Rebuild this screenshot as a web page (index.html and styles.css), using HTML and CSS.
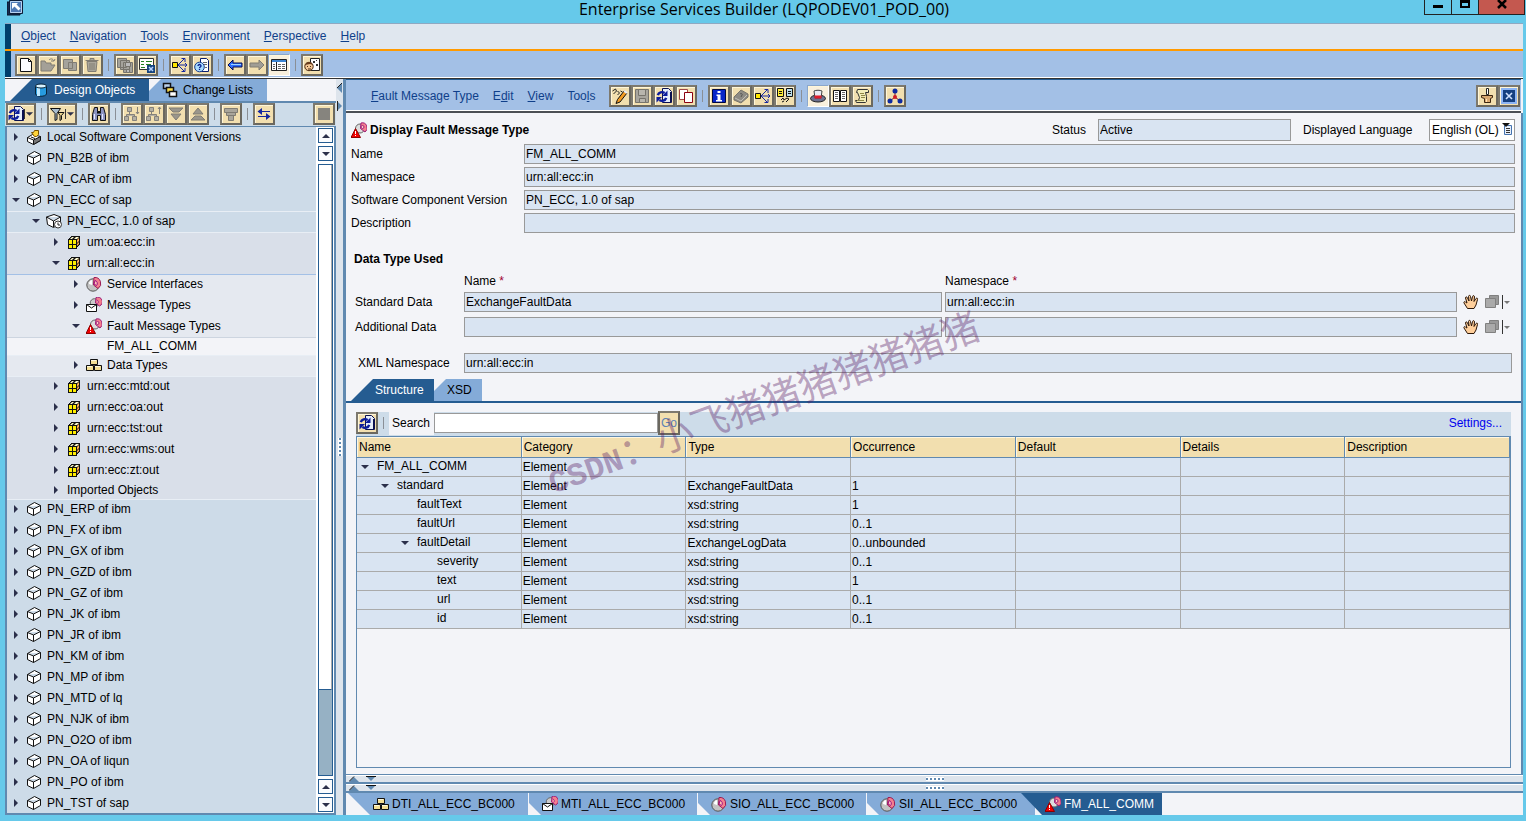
FILE: index.html
```
<!DOCTYPE html>
<html lang="en">
<head>
<meta charset="utf-8">
<title>Enterprise Services Builder (LQPODEV01_POD_00)</title>
<link rel="stylesheet" href="styles.css">
</head>
<body>
<svg class="defs" aria-hidden="true">
  <symbol id="right" viewBox="0 0 10 10"><path d="M3 1v8l4-4z" fill="#2b2f4a"/></symbol>
  <symbol id="down" viewBox="0 0 10 10"><path d="M1 3h8L5 7z" fill="#2b2f4a"/></symbol>
  <symbol id="up" viewBox="0 0 10 10"><path d="M1 7h8L5 3z" fill="#2b2f4a"/></symbol>
  <symbol id="cube" viewBox="0 0 16 16"><path d="M1.500 5.500 8.500 1.500 14.500 4.500V10.500L7.500 14.500 1.500 11.500zM1.500 5.500 7.500 8 14.500 4.500M7.500 8v6.500" fill="#fff" stroke="#111"/></symbol>
  <symbol id="cubeclock" viewBox="0 0 16 16"><path d="M.500 4 8 1.500 14.500 4V10.500L7.500 14.500 1.500 11.500zM.500 4 7.500 8 14.500 4M7.500 8v6" fill="#fff" stroke="#111"/><circle cx="12" cy="11.500" r="3.500" fill="#fff" stroke="#333"/><path d="M12 9.500v2.500h2" fill="none" stroke="#222"/></symbol>
  <symbol id="local" viewBox="0 0 16 16"><path d="M1.500 8.500 6.500 5.500 14.500 7.500V11.500L7.500 15.500 1.500 12.500z" fill="#fff" stroke="#111"/><path d="M7.500 11l7-3.500v4L7.500 15.500z" fill="#777" stroke="#111"/><path d="M1.500 8.500 7.500 11M5 8l4 1.500" fill="none" stroke="#111"/><path d="M5.500 3.500h2l1-2h4v4l-2 2h-2z" fill="#ffd43a" stroke="#7a5200"/></symbol>
  <symbol id="ns" viewBox="0 0 16 16"><path d="M2 5h1V4h1V3h1V2h9v9h-1v1h-1v1h-1v2H2z" fill="#111"/><path d="M4 5l2-2h2L6 5zM8 5l2-2h3l-2 2z" fill="#fffbd0"/><path d="M3 6h3v4H3zM7 6h3v4H7zM3 11h3v3H3zM7 11h3v3H7z" fill="#ffee00"/><path d="M11 6l2-2v3l-2 2zM11 10l2-2v2l-2 2z" fill="#ffae57"/></symbol>
  <symbol id="ball" viewBox="0 0 16 16"><circle cx="7" cy="9" r="6.200" fill="#c4c4c4" stroke="#555"/><path d="M3 8a4 4 0 0 1 3-4v5z" fill="#fff"/><path d="M8 1.500a6 6 0 0 1 4 11L7.500 9z" fill="#f47f8d" stroke="#9b1c55"/><path d="M9 4.500a3 3 0 0 1 1.500 5L8 8z" fill="#ffc0b0" stroke="#9c0f87"/></symbol>
  <symbol id="msg" viewBox="0 0 16 16"><circle cx="8.500" cy="6" r="4.300" fill="#ccc" stroke="#666"/><path d="M10 .500a4.500 4.500 0 0 1 3.500 8.500L9.500 6z" fill="#f47f8d" stroke="#9b1c77"/><path d="M10.500 3a2 2 0 0 1 1 3.500" fill="#ffd2c0" stroke="#9c0f87"/><path d="M.500 7.500h10v7h-10z" fill="#fff" stroke="#111"/><path d="M.500 7.500 5.500 11l5-3.500" fill="none" stroke="#111"/></symbol>
  <symbol id="fault" viewBox="0 0 16 16"><circle cx="9" cy="6.500" r="4.500" fill="#ddd" stroke="#666"/><path d="M10 1a5 5 0 0 1 4 9L9.500 6.500z" fill="#f47f8d" stroke="#9b1c77"/><circle cx="11.500" cy="5" r="1.500" fill="#ffd2c0" stroke="#a02080"/><path d="M4.500 6.500 9.500 15.500H0z" fill="#f00000" stroke="#8c0000"/><path d="M4 9h1v3H4zM4 13h1v1H4z" fill="#fff"/></symbol>
  <symbol id="dtype" viewBox="0 0 16 16"><path d="M4.500 2.500h7v5h-7zM.500 8.500h7v5h-7zM8.500 8.500h7v5h-7z" fill="#f4df94" stroke="#111"/><path d="M5 3.500h5M1 9.500h5M9 9.500h5" stroke="#fffbe0"/></symbol>
  <symbol id="page" viewBox="0 0 16 16"><path d="M2.500 1.500h8l3 3v10h-11z" fill="#fdfdff" stroke="#111"/><path d="M10.500 1.500v3h3" fill="none" stroke="#111"/></symbol>
  <symbol id="open" viewBox="0 0 16 16"><path d="M1 14V4h4l1 2h5v2h4l-4 6z" fill="#a4a097" stroke="#807c73"/><path d="M9 3c2-2 4-1 5 1l1-2M14 4h-3" fill="none" stroke="#807c73"/></symbol>
  <symbol id="copyoff" viewBox="0 0 16 16"><path d="M1.500 2.500h9v9h-9zM6.500 5.500h8v8h-8z" fill="#a5a39c" stroke="#807c73"/></symbol>
  <symbol id="trash" viewBox="0 0 16 16"><path d="M3 4.500h10l-1 10H4zM1.500 3.500h13M6 3V1.500h4V3" fill="#aaa69b" stroke="#807c73"/><path d="M6 6v7M8 6v7M10 6v7" stroke="#807c73"/></symbol>
  <symbol id="saveall" viewBox="0 0 16 16"><path d="M.500 1.500h9v9h-9zM3.500 3.500h9v9h-9zM6.500 5.500h9v10h-9z" fill="#a5a39c" stroke="#77746c"/><path d="M8.500 5.500h5v4h-5zM9.500 12.500h3v3h-3z" fill="#bbb" stroke="#77746c"/></symbol>
  <symbol id="listx" viewBox="0 0 16 16"><path d="M.500 1.500h14v11h-14z" fill="#fff" stroke="#333"/><path d="M2 4.500h3m2 0h6M2 7.500h3m2 0h5M2 10.500h4" stroke="#248024"/><path d="M8 8h8v8H8z" fill="#16447f"/><path d="M10 10l4 4m0-4-4 4" stroke="#b8d4ff" stroke-width="1.500"/></symbol>
  <symbol id="where" viewBox="0 0 16 16"><path d="M6 8h9M6 8l6-6M6 8l6 6M13 6l2 2-2 2M9.500 1.500H13V5M9.500 14.500H13V11" fill="none" stroke="#1527a0"/><path d="M.500 5.500h5v5h-5z" fill="#ffe600" stroke="#111"/></symbol>
  <symbol id="helpdoc" viewBox="0 0 16 16"><path d="M6.500 1.500h6l2 2v11h-8z" fill="#fff" stroke="#0a1f70"/><path d="M9 5.500h4M9 7.500h4M11 10.500h2" stroke="#666"/><circle cx="5.500" cy="10" r="4.800" fill="#a8dcff" stroke="#173a8c"/><path d="M4 9c0-2 3-2 3 0 0 1-1.500 1-1.500 2.200M5.500 12v1" fill="none" stroke="#0a1f90" stroke-width="1.300"/></symbol>
  <symbol id="back" viewBox="0 0 16 16"><path d="M1 8l5-5v3h9v4H6v3z" fill="#2c6cff" stroke="#050a50"/><path d="M4 7.500h10" stroke="#9fd4ff"/></symbol>
  <symbol id="fwd" viewBox="0 0 16 16"><path d="M15 8l-5-5v3H1v4h9v3z" fill="#a09d95" stroke="#807c73"/></symbol>
  <symbol id="panes" viewBox="0 0 16 16"><path d="M.500 2.500h15v11H.500z" fill="#fff" stroke="#222"/><path d="M1 4h14" stroke="#3b83d0" stroke-width="2"/><path d="M5.500 5v8" stroke="#222"/><path d="M2 7.500h2m-2 2h2m-2 2h2m3-4h3m1 0h3m-7 2h3m1 0h3m-7 2h3m1 0h3" stroke="#666"/></symbol>
  <symbol id="user" viewBox="0 0 16 16"><path d="M6.500 1.500h9v12h-9z" fill="#fff" stroke="#222"/><path d="M9 4h2v2H9zM12 7h2v2h-2zM12 3h1v1h-1z" fill="#333"/><circle cx="5" cy="9.500" r="4.200" fill="#f4c794" stroke="#4a2a12"/><path d="M1 8c1-4 7-4 8 0L6 7z" fill="#6a3d1c"/><path d="M3 9.500h1m2 0h1M4 12h3" stroke="#4a2a12"/></symbol>
  <symbol id="refresh" viewBox="0 0 16 16"><path d="M6.500.500h6l3 3v11h-9z" fill="#e6eefb" stroke="#0a1050"/><path d="M14.500 4v11" stroke="#0a1050"/><path d="M1.800 7.200A4.400 4.400 0 0 1 8.600 5M10.200 9.800A4.400 4.400 0 0 1 3.400 12" fill="none" stroke="#0c1c9c" stroke-width="2.400"/><path d="M11.500 2.500v5.500H6zM.500 14.500V9H6z" fill="#0c1c9c"/></symbol>
  <symbol id="filter" viewBox="0 0 16 16"><path d="M1.500 2.500h10L8 7.500v6l-2 1v-7z" fill="#a9bdd0" stroke="#111"/><path d="M9 6.500h6l-2.500 3v4l-1.500 1v-5z" fill="#eed893" stroke="#111"/></symbol>
  <symbol id="find" viewBox="0 0 16 16"><path d="M3.500 1.500h3v4h3v-4h3l2 7v6h-5v-5h-3v5h-5v-6z" fill="#8c94c2" stroke="#111"/><path d="M3.500 8v5M11.500 8v5" stroke="#e6eaff"/><path d="M6 6.500h4" stroke="#111" stroke-width="2"/></symbol>
  <symbol id="expand" viewBox="0 0 16 16"><path d="M3.500 1.500h4v4h-4zM.500 10.500h4v4h-4zM8.500 10.500h4v4h-4zM5.500 6v2M2.500 10V8.500h8V10M13.500 1v7M12 6l1.500 2L15 6" fill="#b3afa4" stroke="#85817a"/></symbol>
  <symbol id="collapse" viewBox="0 0 16 16"><path d="M3.500 1.500h4v4h-4zM.500 10.500h4v4h-4zM8.500 10.500h4v4h-4zM5.500 6v2M2.500 10V8.500h8V10M13.500 8V1M12 3l1.500-2L15 3" fill="#b3afa4" stroke="#85817a"/></symbol>
  <symbol id="alldown" viewBox="0 0 16 16"><path d="M1 2h14l-4 4H5zM3 8h10l-5 6z" fill="#9a968c" stroke="#807c73"/></symbol>
  <symbol id="allup" viewBox="0 0 16 16"><path d="M8 2l5 6H3zM5 10h6l4 4H1z" fill="#9a968c" stroke="#807c73"/></symbol>
  <symbol id="sieve" viewBox="0 0 16 16"><path d="M1.500 2.500h13v4h-13zM3.500 6.500h9v3h-9zM5.500 9.500h5v5h-5z" fill="#aaa69b" stroke="#807c73"/></symbol>
  <symbol id="swap" viewBox="0 0 16 16"><path d="M14 5.500H3M2 10.500h11" stroke="#1527a0"/><path d="M6 2v7L1.500 5.500zM10 7v7l4.500-3.500z" fill="#1527a0"/></symbol>
  <symbol id="stop" viewBox="0 0 16 16"><path d="M2 2h12v12H2z" fill="#86847e"/></symbol>
  <symbol id="edit" viewBox="0 0 16 16"><path d="M5.500 11.500 12 3l3 2-7 9-4 1.500z" fill="#f39b22" stroke="#111"/><path d="M12 3l3 2" stroke="#e8eefc" stroke-width="2"/><path d="M.500 3l3-2 1 2-3 3m4-3 2 2-2 2m3-4 2 1" fill="none" stroke="#222"/></symbol>
  <symbol id="disk" viewBox="0 0 16 16"><path d="M1.500 1.500h13v13h-13z" fill="#a8a59d" stroke="#77746c"/><path d="M4.500 1.500h7v6h-7zM5.500 10.500h6v4h-6z" fill="#b9b6ae" stroke="#77746c"/></symbol>
  <symbol id="copy" viewBox="0 0 16 16"><path d="M1.500 1.500h8v10h-8z" fill="#fff" stroke="#a04848"/><path d="M6.500 4.500h8v10h-8z" fill="#fff" stroke="#8a0010"/></symbol>
  <symbol id="info" viewBox="0 0 16 16"><path d="M1.500 1.500h13v13h-13z" fill="#0826c8" stroke="#000840"/><path d="M6.500 3h3v2h-3zM5.500 6.500h4V12h1.500v1.500h-6V12h1.500V8H5.500z" fill="#fff"/></symbol>
  <symbol id="book" viewBox="0 0 16 16"><path d="M1 9 8 2l7 4v3l-7 6-7-3z" fill="#8e8b84" stroke="#77746c"/><path d="M2 10l6 3 6-6" fill="none" stroke="#c2bfb7"/><path d="M7 6c1-1 3 0 2 1L8 9" fill="none" stroke="#555"/></symbol>
  <symbol id="compare" viewBox="0 0 16 16"><path d="M.500.500h6v8h-6z" fill="#ffed37" stroke="#111"/><path d="M9.500.500h6v8h-6z" fill="#b9ddec" stroke="#111"/><path d="M2 3.500h3M2 5.500h3m6-2h3m-3 2h3" stroke="#111"/><path d="M4 12l2-2 1 2 3-2 2 1-3 3M5 14l2-1" fill="none" stroke="#111"/></symbol>
  <symbol id="hat" viewBox="0 0 16 16"><ellipse cx="8" cy="10.500" rx="7.500" ry="3.500" fill="#6c7190" stroke="#222"/><path d="M4 3c2-1 6-1 8 0l-1 7H5z" fill="#e8eaf2" stroke="#444"/><path d="M4.500 7.500h7v3h-7z" fill="#e01b2b"/></symbol>
  <symbol id="openbook" viewBox="0 0 16 16"><path d="M1.500 2.500h6v11h-6zM8.500 2.500h6v11h-6z" fill="#fff" stroke="#111"/><path d="M3 4.500h3M3 6.500h3M3 8.500h3M3 10.500h3M10 4.500h3M10 6.500h3M10 8.500h3M10 10.500h3" stroke="#666"/></symbol>
  <symbol id="scroll" viewBox="0 0 16 16"><path d="M3.500 1.500h10l1 1v2h-3l1 4v5l-1 1h-9l-1-2h3l1-3-2-5h-1z" fill="#f3edb9" stroke="#333"/><path d="M6 5.500h4M7 7.500h4M7 9.500h4M3 12.500h7" stroke="#8f8747"/></symbol>
  <symbol id="nodes" viewBox="0 0 16 16"><path d="M8 3v6M8 9l-5 4M8 9l5 4" stroke="#7b1722"/><circle cx="8" cy="3" r="2.500" fill="#0f2aa0"/><circle cx="3" cy="13" r="2.500" fill="#0f2aa0"/><circle cx="13" cy="13" r="2.500" fill="#0f2aa0"/><circle cx="8" cy="9" r="2" fill="#d31c24"/></symbol>
  <symbol id="pin" viewBox="0 0 16 16"><path d="M7.500.500h2v6h-2z" fill="#fff" stroke="#222"/><path d="M2.500 7.500h11v2l-2 1v4h-6v-4l-3-1z" fill="#d9a870" stroke="#3a2410"/><path d="M7.500 11v3" stroke="#ffe4bd"/></symbol>
  <symbol id="closex" viewBox="0 0 16 16"><path d="M1 1h14v14H1z" fill="#154080" stroke="#8cb4f4" stroke-width="2"/><path d="M5 5l6 6m0-6-6 6" stroke="#cfe2ff" stroke-width="1.600"/></symbol>
  <symbol id="cyl" viewBox="0 0 16 16"><path d="M2.500 4v8c1 3 10 3 11 0V4z" fill="#279be0" stroke="#06243c"/><path d="M4 5h3v9H4z" fill="#bde8ff"/><ellipse cx="8" cy="4" rx="5.500" ry="2" fill="#d9f3ff" stroke="#06243c"/></symbol>
  <symbol id="lists" viewBox="0 0 16 16"><path d="M1.500 1.500h7v5h-7z" fill="#bcd2ea" stroke="#111" stroke-width="1.500"/><path d="M4.500 5.500h7v5h-7z" fill="#ffdf4a" stroke="#111" stroke-width="1.500"/><path d="M7.500 9.500h7v5h-7z" fill="#fff" stroke="#111" stroke-width="1.500"/></symbol>
  <symbol id="hand" viewBox="0 0 16 16"><path d="M4.500 14.500 1 9c-.500-1.500 1-2 2-.500L4 9 2.500 4c0-1.500 1.500-1.500 2 0L6 7 5.500 2.500c0-1.500 2-1.500 2 0L8.500 7 9.500 2.500c.500-1.500 2-1 2 .500L11 7.500 13 4.500c1-1 2 0 1.500 1L13 11l-2 3.500z" fill="#ffcf9b" stroke="#2b1608"/></symbol>
  <symbol id="ddoff" viewBox="0 0 26 16"><path d="M4.500 1.500h9v9h-9z" fill="#999" stroke="#808080"/><path d="M.500 4.500h10v9H.500z" fill="#aaa" stroke="#808080"/><path d="M17.500 1v14" stroke="#333"/><path d="M19 7h6l-3 3z" fill="#777"/></symbol>
  <symbol id="app" viewBox="0 0 16 16"><path d="M0 2h13v13H0z" fill="#142c50" stroke="#081428"/><path d="M2.500.500h13v13h-13z" fill="#4c78b4" stroke="#0c1c38"/><path d="M3.500 1.500h11v11h-11z" fill="none" stroke="#b8d2f0"/><path d="M5 3h6L9.500 4.500l4 4-2 2-4-4L5 9z" fill="#fff"/></symbol>
  <symbol id="pair" viewBox="0 0 28 6"><path d="M0 6h10L5 1z" fill="#6089b0"/><path d="M17 0h10l-5 5z" fill="#6089b0"/><path d="M0 5.500 5 .500M17 .500h10" stroke="#111" fill="none"/></symbol>
  <symbol id="sides" viewBox="0 0 7 30"><path d="M6 0v10L1 5z" fill="#6089b0"/><path d="M1 18v10l5-5z" fill="#6089b0"/><path d="M6 0 1 5M1.500 18v10" fill="none" stroke="#222"/></symbol>
  <symbol id="dots" viewBox="0 0 20 4"><path d="M1 2h18" stroke="#fff" stroke-width="4"/><path d="M1 2h18" stroke="#6089b0" stroke-width="2" stroke-dasharray="2 2"/></symbol>
  <symbol id="vdots" viewBox="0 0 4 20"><path d="M2 1v18" stroke="#fff" stroke-width="4"/><path d="M2 1v18" stroke="#6089b0" stroke-width="2" stroke-dasharray="2 2"/></symbol>
</svg>

<header class="titlebar">
  <svg class="i app"><use href="#app"/></svg>
  <h1>Enterprise Services Builder (LQPODEV01_POD_00)</h1>
  <div class="winbtns">
    <button aria-label="Minimize"><svg class="wi" viewBox="0 0 12 12"><path d="M1 5h10v3H1z"/></svg></button><button aria-label="Maximize"><svg class="wi" viewBox="0 0 12 12"><path d="M1 0h10v8H1zM3 3v3h6V3z" fill-rule="evenodd"/></svg></button><button class="x" aria-label="Close"><svg class="wi" viewBox="0 0 12 12"><path d="M2 0l8 8M10 0l-8 8" stroke="#000" stroke-width="2.500"/></svg></button>
  </div>
</header>

<div class="window">
  <div class="top">
    <nav class="menu">
      <button><u>O</u>bject</button><button><u>N</u>avigation</button><button><u>T</u>ools</button><button><u>E</u>nvironment</button><button><u>P</u>erspective</button><button><u>H</u>elp</button>
    </nav>
    <div class="tools main-tools">
      <button class="tb" aria-label="New"><svg class="i"><use href="#page"/></svg></button>
      <button class="tb" aria-label="Open"><svg class="i"><use href="#open"/></svg></button>
      <button class="tb" aria-label="Copy"><svg class="i"><use href="#copyoff"/></svg></button>
      <button class="tb" aria-label="Delete"><svg class="i"><use href="#trash"/></svg></button>
      <i class="sep"></i>
      <button class="tb" aria-label="Save all"><svg class="i"><use href="#saveall"/></svg></button>
      <button class="tb" aria-label="Close all"><svg class="i"><use href="#listx"/></svg></button>
      <i class="sep"></i>
      <button class="tb" aria-label="Where used"><svg class="i"><use href="#where"/></svg></button>
      <button class="tb" aria-label="Documentation"><svg class="i"><use href="#helpdoc"/></svg></button>
      <i class="sep"></i>
      <button class="tb" aria-label="Back"><svg class="i"><use href="#back"/></svg></button>
      <button class="tb" aria-label="Forward"><svg class="i"><use href="#fwd"/></svg></button>
      <button class="tb on" aria-label="Navigation area"><svg class="i"><use href="#panes"/></svg></button>
      <i class="sep"></i>
      <button class="tb" aria-label="User settings"><svg class="i"><use href="#user"/></svg></button>
    </div>
  </div>

  <div class="main">
    <aside class="left">
      <div class="tabs left-tabs">
        <button class="tab active"><svg class="i s"><use href="#cyl"/></svg>Design Objects</button><button class="tab second"><svg class="i s"><use href="#lists"/></svg>Change Lists</button>
      </div>
      <div class="tools tree-tools">
        <button class="tb wide" aria-label="Refresh"><svg class="i"><use href="#refresh"/></svg><svg class="dd"><use href="#down"/></svg></button>
        <i class="sep"></i>
        <button class="tb wide" aria-label="Filter"><svg class="i"><use href="#filter"/></svg><svg class="dd"><use href="#down"/></svg></button>
        <i class="sep"></i>
        <button class="tb" aria-label="Find"><svg class="i"><use href="#find"/></svg></button>
        <i class="sep"></i>
        <button class="tb" aria-label="Expand node"><svg class="i"><use href="#expand"/></svg></button>
        <button class="tb" aria-label="Collapse node"><svg class="i"><use href="#collapse"/></svg></button>
        <button class="tb" aria-label="Expand all"><svg class="i"><use href="#alldown"/></svg></button>
        <button class="tb" aria-label="Collapse all"><svg class="i"><use href="#allup"/></svg></button>
        <i class="sep"></i>
        <button class="tb" aria-label="Restrict"><svg class="i"><use href="#sieve"/></svg></button>
        <i class="sep"></i>
        <button class="tb" aria-label="Switch view"><svg class="i"><use href="#swap"/></svg></button>
        <button class="tb end" aria-label="Stop"><svg class="i"><use href="#stop"/></svg></button>
      </div>
      <div class="treebox">
        <ul class="tree">
          <li class="n l0"><svg class="a"><use href="#right"/></svg><svg class="i"><use href="#local"/></svg>Local Software Component Versions</li>
          <li class="n l0"><svg class="a"><use href="#right"/></svg><svg class="i"><use href="#cube"/></svg>PN_B2B of ibm</li>
          <li class="n l0"><svg class="a"><use href="#right"/></svg><svg class="i"><use href="#cube"/></svg>PN_CAR of ibm</li>
          <li class="n l0"><svg class="a"><use href="#down"/></svg><svg class="i"><use href="#cube"/></svg>PN_ECC of sap</li>
          <li class="n l1 line"><svg class="a"><use href="#down"/></svg><svg class="i"><use href="#cubeclock"/></svg>PN_ECC, 1.0 of sap</li>
          <li class="n l2 line"><svg class="a"><use href="#right"/></svg><svg class="i"><use href="#ns"/></svg>um:oa:ecc:in</li>
          <li class="n l2"><svg class="a"><use href="#down"/></svg><svg class="i"><use href="#ns"/></svg>urn:all:ecc:in</li>
          <li class="n l3 line blue"><svg class="a"><use href="#right"/></svg><svg class="i"><use href="#ball"/></svg>Service Interfaces</li>
          <li class="n l3"><svg class="a"><use href="#right"/></svg><svg class="i"><use href="#msg"/></svg>Message Types</li>
          <li class="n l3"><svg class="a"><use href="#down"/></svg><svg class="i"><use href="#fault"/></svg>Fault Message Types</li>
          <li class="n l4 line gray short"><span class="a"></span>FM_ALL_COMM</li>
          <li class="n l3 line"><svg class="a"><use href="#right"/></svg><svg class="i"><use href="#dtype"/></svg>Data Types</li>
          <li class="n l2 line"><svg class="a"><use href="#right"/></svg><svg class="i"><use href="#ns"/></svg>urn:ecc:mtd:out</li>
          <li class="n l2"><svg class="a"><use href="#right"/></svg><svg class="i"><use href="#ns"/></svg>urn:ecc:oa:out</li>
          <li class="n l2"><svg class="a"><use href="#right"/></svg><svg class="i"><use href="#ns"/></svg>urn:ecc:tst:out</li>
          <li class="n l2"><svg class="a"><use href="#right"/></svg><svg class="i"><use href="#ns"/></svg>urn:ecc:wms:out</li>
          <li class="n l2"><svg class="a"><use href="#right"/></svg><svg class="i"><use href="#ns"/></svg>urn:ecc:zt:out</li>
          <li class="n l2 short"><svg class="a"><use href="#right"/></svg>Imported Objects</li>
          <li class="n l0 line"><svg class="a"><use href="#right"/></svg><svg class="i"><use href="#cube"/></svg>PN_ERP of ibm</li>
          <li class="n l0"><svg class="a"><use href="#right"/></svg><svg class="i"><use href="#cube"/></svg>PN_FX of ibm</li>
          <li class="n l0"><svg class="a"><use href="#right"/></svg><svg class="i"><use href="#cube"/></svg>PN_GX of ibm</li>
          <li class="n l0"><svg class="a"><use href="#right"/></svg><svg class="i"><use href="#cube"/></svg>PN_GZD of ibm</li>
          <li class="n l0"><svg class="a"><use href="#right"/></svg><svg class="i"><use href="#cube"/></svg>PN_GZ of ibm</li>
          <li class="n l0"><svg class="a"><use href="#right"/></svg><svg class="i"><use href="#cube"/></svg>PN_JK of ibm</li>
          <li class="n l0"><svg class="a"><use href="#right"/></svg><svg class="i"><use href="#cube"/></svg>PN_JR of ibm</li>
          <li class="n l0"><svg class="a"><use href="#right"/></svg><svg class="i"><use href="#cube"/></svg>PN_KM of ibm</li>
          <li class="n l0"><svg class="a"><use href="#right"/></svg><svg class="i"><use href="#cube"/></svg>PN_MP of ibm</li>
          <li class="n l0"><svg class="a"><use href="#right"/></svg><svg class="i"><use href="#cube"/></svg>PN_MTD of lq</li>
          <li class="n l0"><svg class="a"><use href="#right"/></svg><svg class="i"><use href="#cube"/></svg>PN_NJK of ibm</li>
          <li class="n l0"><svg class="a"><use href="#right"/></svg><svg class="i"><use href="#cube"/></svg>PN_O2O of ibm</li>
          <li class="n l0"><svg class="a"><use href="#right"/></svg><svg class="i"><use href="#cube"/></svg>PN_OA of liqun</li>
          <li class="n l0"><svg class="a"><use href="#right"/></svg><svg class="i"><use href="#cube"/></svg>PN_PO of ibm</li>
          <li class="n l0"><svg class="a"><use href="#right"/></svg><svg class="i"><use href="#cube"/></svg>PN_TST of sap</li>
        </ul>
        <div class="scroll">
          <button aria-label="Scroll up"><svg class="a"><use href="#up"/></svg></button>
          <button aria-label="Scroll down"><svg class="a"><use href="#down"/></svg></button>
          <div class="track"><div class="thumb"></div></div>
          <button aria-label="Scroll up"><svg class="a"><use href="#up"/></svg></button>
          <button aria-label="Scroll down"><svg class="a"><use href="#down"/></svg></button>
        </div>
      </div>
    </aside>

    <div class="split"><svg class="sides"><use href="#sides"/></svg><svg class="vdots"><use href="#vdots"/></svg></div>

    <section class="right">
      <div class="editor-bar">
        <nav class="menu">
          <button><u>F</u>ault Message Type</button><button>E<u>d</u>it</button><button><u>V</u>iew</button><button>Too<u>l</u>s</button>
        </nav>
        <div class="tools">
          <button class="tb" aria-label="Switch edit mode"><svg class="i"><use href="#edit"/></svg></button>
          <button class="tb" aria-label="Save"><svg class="i"><use href="#disk"/></svg></button>
          <button class="tb" aria-label="Refresh"><svg class="i"><use href="#refresh"/></svg></button>
          <button class="tb" aria-label="Copy"><svg class="i"><use href="#copy"/></svg></button>
          <i class="sep"></i>
          <button class="tb" aria-label="Properties"><svg class="i"><use href="#info"/></svg></button>
          <button class="tb" aria-label="Documentation"><svg class="i"><use href="#book"/></svg></button>
          <button class="tb" aria-label="Where used"><svg class="i"><use href="#where"/></svg></button>
          <button class="tb" aria-label="Compare"><svg class="i"><use href="#compare"/></svg></button>
          <i class="sep"></i>
          <button class="tb on" aria-label="Header"><svg class="i"><use href="#hat"/></svg></button>
          <button class="tb" aria-label="Details"><svg class="i"><use href="#openbook"/></svg></button>
          <button class="tb" aria-label="History"><svg class="i"><use href="#scroll"/></svg></button>
          <i class="sep"></i>
          <button class="tb" aria-label="Dependencies"><svg class="i"><use href="#nodes"/></svg></button>
        </div>
        <div class="tools end">
          <button class="tb" aria-label="Pin"><svg class="i"><use href="#pin"/></svg></button>
          <button class="tb" aria-label="Close editor"><svg class="i"><use href="#closex"/></svg></button>
        </div>
      </div>

      <div class="content">
        <div class="head">
          <svg class="i"><use href="#fault"/></svg><h2>Display Fault Message Type</h2>
          <label for="status">Status</label><input id="status" class="f status" value="Active" readonly>
          <label for="lang" class="langlabel">Displayed Language</label>
          <span class="lang"><select id="lang"><option>English (OL)</option></select><svg class="langicon" viewBox="0 0 10 14"><path d="M2.500 3.500h7v9h-7z" fill="#e8effa" stroke="#4573b0"/><path d="M4 6.500h4M4 8.500h4M4 10.500h4" stroke="#333"/><path d="M0 1h8L4 5z" fill="#111"/></svg></span>
        </div>
        <div class="fields">
          <label for="name">Name</label><input id="name" class="f" value="FM_ALL_COMM" readonly>
          <label for="nspace">Namespace</label><input id="nspace" class="f" value="urn:all:ecc:in" readonly>
          <label for="scv">Software Component Version</label><input id="scv" class="f" value="PN_ECC, 1.0 of sap" readonly>
          <label for="desc">Description</label><input id="desc" class="f" readonly>
        </div>
        <h2 class="sub">Data Type Used</h2>
        <div class="dtgrid">
          <span></span><span>Name <b class="req">*</b></span><span>Namespace <b class="req">*</b></span><span></span>
          <label for="sd">Standard Data</label><input id="sd" class="f" value="ExchangeFaultData" readonly><input class="f" aria-label="Standard data namespace" value="urn:all:ecc:in" readonly>
          <span class="acts"><svg class="i"><use href="#hand"/></svg><svg class="ddoff"><use href="#ddoff"/></svg></span>
          <label for="ad">Additional Data</label><input id="ad" class="f" readonly><input class="f" aria-label="Additional data namespace" readonly>
          <span class="acts"><svg class="i"><use href="#hand"/></svg><svg class="ddoff"><use href="#ddoff"/></svg></span>
        </div>
        <div class="xmlrow"><label for="xml">XML Namespace</label><input id="xml" class="f" value="urn:all:ecc:in" readonly></div>
        <div class="tabs inner-tabs"><button class="tab active">Structure</button><button class="tab second">XSD</button></div>
        <div class="panel">
          <div class="searchbar">
            <button class="tb" aria-label="Refresh"><svg class="i"><use href="#refresh"/></svg></button><i class="sep"></i>
            <label for="q">Search</label><input id="q" class="q"><button class="go">Go</button>
            <a href="#settings" class="settings">Settings...</a>
          </div>
          <div class="tablebox">
            <table>
              <thead><tr><th>Name</th><th>Category</th><th>Type</th><th>Occurrence</th><th>Default</th><th>Details</th><th>Description</th></tr></thead>
              <tbody>
                <tr><td class="t0"><svg class="a"><use href="#down"/></svg>FM_ALL_COMM</td><td>Element</td><td></td><td></td><td></td><td></td><td></td></tr>
                <tr><td class="t1"><svg class="a"><use href="#down"/></svg>standard</td><td>Element</td><td>ExchangeFaultData</td><td>1</td><td></td><td></td><td></td></tr>
                <tr><td class="t2 leaf">faultText</td><td>Element</td><td>xsd:string</td><td>1</td><td></td><td></td><td></td></tr>
                <tr><td class="t2 leaf">faultUrl</td><td>Element</td><td>xsd:string</td><td>0..1</td><td></td><td></td><td></td></tr>
                <tr><td class="t2"><svg class="a"><use href="#down"/></svg>faultDetail</td><td>Element</td><td>ExchangeLogData</td><td>0..unbounded</td><td></td><td></td><td></td></tr>
                <tr><td class="t3 leaf">severity</td><td>Element</td><td>xsd:string</td><td>0..1</td><td></td><td></td><td></td></tr>
                <tr><td class="t3 leaf">text</td><td>Element</td><td>xsd:string</td><td>1</td><td></td><td></td><td></td></tr>
                <tr><td class="t3 leaf">url</td><td>Element</td><td>xsd:string</td><td>0..1</td><td></td><td></td><td></td></tr>
                <tr><td class="t3 leaf">id</td><td>Element</td><td>xsd:string</td><td>0..1</td><td></td><td></td><td></td></tr>
              </tbody>
            </table>
          </div>
        </div>
      </div>
      <div class="hsplit"><svg class="pair"><use href="#pair"/></svg><svg class="dots"><use href="#dots"/></svg></div>
      <div class="hsplit"><svg class="pair"><use href="#pair"/></svg><svg class="dots"><use href="#dots"/></svg></div>
      <div class="bottom">
        <button class="bt first"><svg class="i"><use href="#dtype"/></svg>DTI_ALL_ECC_BC000</button>
        <button class="bt"><svg class="i"><use href="#msg"/></svg>MTI_ALL_ECC_BC000</button>
        <button class="bt"><svg class="i"><use href="#ball"/></svg>SIO_ALL_ECC_BC000</button>
        <button class="bt"><svg class="i"><use href="#ball"/></svg>SII_ALL_ECC_BC000</button>
        <button class="bt active"><svg class="i"><use href="#fault"/></svg>FM_ALL_COMM</button>
      </div>
    </section>
  </div>
</div>
<div class="mark" aria-hidden="true"><span>CSDN</span>：小飞猪猪猪猪猪猪猪</div>
</body>
</html>
```

FILE: styles.css
```
* { box-sizing: border-box; }
body {
  margin: 0; height: 100vh; display: flex; flex-direction: column; overflow: hidden;
  padding: 0 3px 6px 5px; position: relative;
  background: #66c9ea; color: #000;
  font: 12px/16px "Liberation Sans", Arial, sans-serif;
}
button, input, select { font: inherit; color: inherit; border-radius: 0; margin: 0; padding: 0; }
button { background: none; border: 0; white-space: nowrap; }
h1, h2, ul { margin: 0; padding: 0; font: inherit; list-style: none; }
label { white-space: nowrap; }
svg { flex: none; display: block; }
.defs { position: absolute; width: 0; height: 0; }
.i { width: 16px; height: 16px; }
.a { width: 10px; height: 10px; flex: none; }

.titlebar { height: 23px; flex: none; display: flex; align-items: flex-start; }
.titlebar .app { margin-left: 2px; }
.titlebar h1 { flex: 1; text-align: center; font: 16px/18px "Open Sans", "Noto Sans", sans-serif; padding-left: 80px; }
.winbtns { display: flex; margin-right: -2px; }
.winbtns button { width: 28px; height: 15px; border: 1px solid #222; border-top: 0; margin-left: -1px; display: flex; justify-content: center; align-items: flex-start; padding-top: 0; }
.winbtns .x { width: 47px; background: #c4584f; }
.wi { width: 12px; height: 12px; }

.window { flex: 1; min-height: 0; display: flex; flex-direction: column; }
.top { flex: none; border-top: 1px solid #8fa9c2; }
.menu { display: flex; align-items: center; gap: 14px; color: #0f3f8a; }
.top .menu { height: 25px; padding: 0 0 1px 10px; background: #e0e7ef; border-left: 6px solid #003f6b; }
.main-tools { border-top: 2px solid #ff9a00; height: 30px; background: linear-gradient(90deg, #003f6b 6px, #a3c0e6 6px); padding: 1px 0 0 10px; border-bottom: 1px solid #333; box-shadow: inset 0 -1px #fff; }
.tools { display: flex; align-items: center; }
.tb {
  width: 22px; height: 22px; flex: none; display: flex; align-items: center; justify-content: center;
  background: #f2dfaf; border: 2px solid #6b685f; border-top-color: #7d796e; border-left-color: #7d796e;
  box-shadow: inset 1px 1px #fff6d8;
}
.tb.on { background: #f9f0dd; border: 1px solid #8aa6cc; border-right-color: #fff; border-bottom-color: #fff; }
.tb.wide { width: 30px; }
.dd { width: 10px; height: 10px; border-left: 1px solid #333; }
.sep { width: 11px; height: 12px; flex: none; background: linear-gradient(#8a8f96, #8a8f96) center / 1px 12px no-repeat; }
.end { margin-left: auto; }

.main { flex: 1; min-height: 0; display: flex; }
.left { width: 331px; flex: none; display: flex; flex-direction: column; background: #f3f4f8; }
.tabs { display: flex; }
.tab { height: 22px; display: flex; align-items: center; gap: 5px; }
.tab.active { background: #255c91; color: #fff; clip-path: polygon(0 100%, 22px 0, 100% 0, 100% 100%); }
.tab.second { background: #84abd8; clip-path: polygon(0 12px, 12px 0, 100% 0, 100% 100%, 0 100%); }
.left-tabs { flex: none; padding-left: 5px; }
.left-tabs .active { padding: 0 11px 0 23px; width: 139px; }
.left-tabs .second { padding-left: 13px; width: 118px; }
.i.s { height: 16px; }
.tree-tools { height: 25px; flex: none; background: #cddce9; border-top: 2px solid #6089b0; padding: 0 1px 1px; }
.treebox { flex: 1; min-height: 0; display: flex; border: 2px solid #6089b0; border-top-width: 1px; background: #fff; }
.tree { flex: 1; overflow: hidden; background: #cddbe8; }
.n { height: 21px; display: flex; align-items: center; gap: 5px; white-space: nowrap; padding-bottom: 1px; }
.n.short { height: 18px; gap: 6px; padding-bottom: 0; }
.l0 { padding-left: 4px; background: #cddbe8; }
.l1 { padding-left: 24px; background: #cddbe8; }
.l2 { padding-left: 44px; background: #d9dfe9; }
.l3 { padding-left: 64px; background: #e5e9f0; }
.l4 { padding-left: 84px; background: #f3f4f8; }
.line { box-shadow: inset 0 1px #e8eef5; }
.line.blue { box-shadow: inset 0 1px #a3c0e6; }
.line.gray { box-shadow: inset 0 1px #cdd5e0; }
.scroll { width: 18px; flex: none; display: flex; flex-direction: column; gap: 3px; padding: 1px 1px 1px 2px; }
.scroll button { width: 15px; height: 15px; flex: none; border: 1px solid #255c91; display: flex; align-items: center; justify-content: center; background: #fafbfd; }
.track { flex: 1; width: 15px; border: 1px solid #255c91; background: #96b1c4; }
.thumb { height: 86%; background: #fff; border-bottom: 1px solid #255c91; border-right: 1px solid #aaa; }

.split { width: 7px; flex: none; background: #dde4ec; display: flex; flex-direction: column; align-items: center; justify-content: center; position: relative; }
.sides { position: absolute; top: 4px; left: 0; width: 7px; height: 30px; }
.vdots { width: 4px; height: 20px; }

.right { flex: 1; min-width: 0; display: flex; flex-direction: column; border-left: 3px solid #6089b0; background: #f3f4f8; }
.editor-bar { height: 34px; flex: none; display: flex; align-items: center; background: #a3c0e6; border-top: 1px solid #255c91; border-bottom: 2px solid #4b4f55; box-shadow: inset 0 -1px #fff; padding: 1px 1px 0 25px; margin-right: 2px; }
.editor-bar .menu { width: 238px; }
.content { flex: 1; min-height: 0; display: flex; flex-direction: column; padding-top: 6px; border-right: 2px solid #6089b0; border-bottom: 1px solid #6089b0; }
.head { display: flex; align-items: center; height: 22px; padding: 0 6px 0 5px; }
.head h2 { flex: 1; padding-left: 3px; }
h2 { font-weight: bold; }
.f { height: 20px; width: 100%; min-width: 0; background: #d9e4f2; border: 1px solid #999; padding: 0 1px; outline: 0; }
.head .f { width: 193px; height: 22px; margin: 0 12px; }
.langlabel { width: 114px; }
.lang { position: relative; width: 86px; height: 22px; margin-left: 12px; }
.lang select { width: 100%; height: 100%; background: #fff; border: 1px solid #999; appearance: none; padding-left: 2px; }
.langicon { position: absolute; right: 3px; top: 3px; width: 10px; height: 14px; }
.fields { display: grid; grid-template-columns: 173px 1fr; row-gap: 3px; align-items: center; padding: 3px 6px 0 5px; }
.sub { padding: 18px 8px 6px; }
.dtgrid { display: grid; grid-template-columns: 106px 478fr 512fr 58px; column-gap: 3px; row-gap: 5px; align-items: center; padding-left: 9px; padding-right: 3px; }
.dtgrid > span:nth-child(-n+4) { margin-bottom: -2px; }
.req { font-weight: normal; color: #a00030; }
.acts { display: flex; gap: 6px; padding-left: 3px; }
.ddoff { width: 26px; height: 16px; }
.xmlrow { display: grid; grid-template-columns: 106px 1fr; align-items: center; padding: 16px 9px 6px 12px; }
.inner-tabs { padding-left: 5px; border-bottom: 2px solid #255c91; flex: none; }
.inner-tabs .active { padding-left: 24px; width: 83px; }
.inner-tabs .second { padding-left: 13px; width: 48px; }
.panel { flex: 1; min-height: 0; display: flex; flex-direction: column; margin: 9px 10px 6px; }
.searchbar { height: 24px; flex: none; display: flex; align-items: center; background: #cddce9; padding: 0 9px 2px 0; }
.searchbar label { background: #f3f4f8; height: 24px; line-height: 24px; width: 45px; padding-left: 3px; }
.q { width: 224px; height: 20px; background: #fff; border: 1px solid #999; padding: 0 3px; outline: 0; }
.go { width: 22px; height: 24px; background: #f2dfaf; border: 2px solid #6b685f; border-top-color: #7d796e; color: #5b82b5; }
.settings { margin-left: auto; color: #0000ee; text-decoration: none; }
.tablebox { flex: 1; border: 1px solid #6089b0; }
table { width: 100%; table-layout: fixed; border-collapse: separate; border-spacing: 0; }
th { height: 21px; padding: 0 2px; text-align: left; font-weight: normal; background: #f2dfaf; border-right: 1px solid #6089b0; border-bottom: 1px solid #6089b0; box-shadow: inset 1px 1px #fff6e0; }
td { height: 19px; padding: 0 0 0 1px; line-height: 16px; background: #d9e4f2; border-right: 1px solid #aaa; border-bottom: 1px solid #aaa; white-space: nowrap; }
td:first-child { padding-bottom: 2px; }
td .a { display: inline-block; margin-right: 7px; vertical-align: -2px; }
.t0 { padding-left: 3px; }
.t1 { padding-left: 23px; }
.t2 { padding-left: 43px; }
.t3 { padding-left: 63px; }
.leaf::before { content: ""; display: inline-block; width: 17px; }
.hsplit { height: 9px; flex: none; display: flex; align-items: center; justify-content: center; background: #dde4ec; border-top: 1px solid #fff; border-bottom: 2px solid #6089b0; position: relative; }
.pair { position: absolute; left: 3px; top: 0; width: 28px; height: 6px; }
.dots { width: 20px; height: 4px; }
.bottom { flex: none; display: flex; height: 22px; }
.bt { display: flex; align-items: center; gap: 3px; width: 168px; padding-left: 13px; background: #84abd8; margin-right: 1px; clip-path: polygon(0 0, 100% 0, 100% 100%, 12px 100%, 0 10px); }
.bt.first { width: 182px; padding-left: 27px; clip-path: polygon(2px 0, 100% 0, 100% 100%, 24px 100%); }
.bt.active { width: 141px; padding-left: 24px; margin-left: -15px; background: #255c91; color: #fff; clip-path: polygon(0 0, 100% 0, 100% 100%, 21px 100%); }

.mark {
  position: absolute; left: 558px; top: 455px; pointer-events: none; white-space: nowrap;
  font: 38px/44px "Noto Sans CJK SC", sans-serif; color: rgba(90, 30, 100, .4);
  transform: rotate(-20deg); transform-origin: 0 100%;
}
.mark span { font: bold 32px/44px "Liberation Mono", monospace; }
```
